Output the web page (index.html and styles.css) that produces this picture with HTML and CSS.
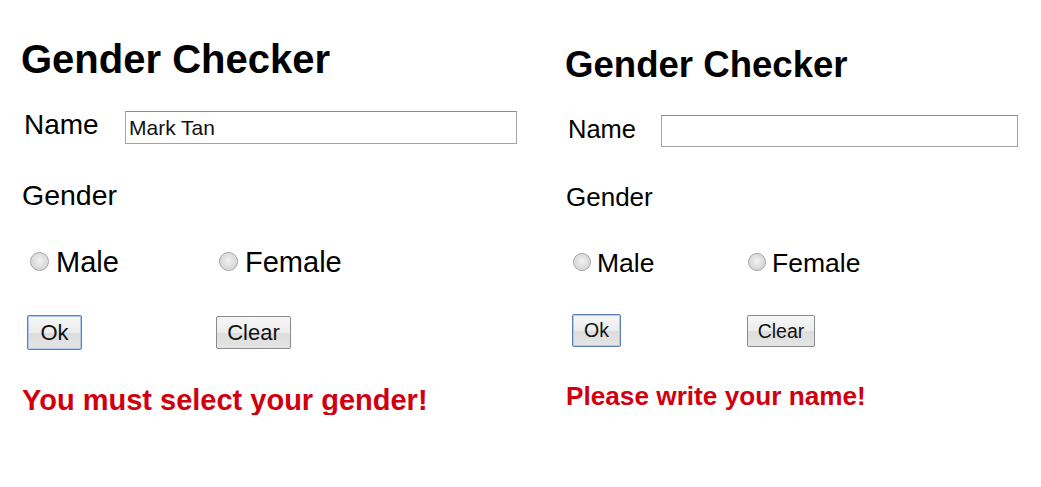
FILE: index.html
```html
<!DOCTYPE html>
<html>
<head>
<meta charset="utf-8">
<title>Gender Checker</title>
<link rel="stylesheet" href="styles.css">
</head>
<body>
<div class="page">
  <section class="panel panel-a">
    <h1 class="title">Gender Checker</h1>
    <div class="name-row">
      <label class="name-label">Name</label>
      <input class="name-input" type="text" value="Mark Tan">
    </div>
    <div class="gender-label">Gender</div>
    <div class="choice-row">
      <label class="choice"><input type="radio" name="ga" class="radio"><span>Male</span></label>
      <label class="choice"><input type="radio" name="ga" class="radio"><span>Female</span></label>
    </div>
    <div class="button-row">
      <button class="btn btn-ok">Ok</button>
      <button class="btn btn-clear">Clear</button>
    </div>
    <p class="error">You must select your gender!</p>
  </section>
  <section class="panel panel-b">
    <h1 class="title">Gender Checker</h1>
    <div class="name-row">
      <label class="name-label">Name</label>
      <input class="name-input" type="text" value="">
    </div>
    <div class="gender-label">Gender</div>
    <div class="choice-row">
      <label class="choice"><input type="radio" name="gb" class="radio"><span>Male</span></label>
      <label class="choice"><input type="radio" name="gb" class="radio"><span>Female</span></label>
    </div>
    <div class="button-row">
      <button class="btn btn-ok">Ok</button>
      <button class="btn btn-clear">Clear</button>
    </div>
    <p class="error">Please write your name!</p>
  </section>
</div>
</body>
</html>
```
FILE: styles.css
```css
html, body {
  margin: 0;
  padding: 0;
  background: #ffffff;
}
body {
  font-family: "Liberation Sans", Arial, sans-serif;
  color: #000;
}
.page {
  display: flex;
  padding-left: 20px;
}
.panel {
  display: flex;
  flex-direction: column;
  align-items: flex-start;
}
.panel-a { width: 544px; }
.panel-b { flex: 1; }

.title {
  margin: 0;
  margin-left: 1px;
  font-weight: bold;
}
.name-row {
  display: flex;
  align-items: flex-start;
}
.name-label {
  display: block;
  margin-left: 4px;
}
.name-input {
  box-sizing: border-box;
  margin: 0;
  border: 1px solid #a3a3a3;
  border-top-color: #8c8c8c;
  background: #fff;
  font-family: "Liberation Sans", Arial, sans-serif;
  color: #111;
  padding: 0 0 0 3px;
  outline: none;
}
.gender-label {
  margin-left: 2px;
}
.choice-row, .button-row {
  display: grid;
  align-items: flex-start;
}
.choice {
  display: flex;
  align-items: flex-start;
}
.radio {
  appearance: none;
  -webkit-appearance: none;
  margin: 0;
  box-sizing: border-box;
  border-radius: 50%;
  border: 1px solid #a2a2a2;
  background: radial-gradient(circle at 50% 45%, #f2f2f2 0%, #dcdcdc 55%, #c4c4c4 100%);
  box-shadow: inset 0 0 1px #fff;
}
.btn {
  box-sizing: border-box;
  margin: 0;
  padding: 0;
  font-family: "Liberation Sans", Arial, sans-serif;
  color: #111;
  background: linear-gradient(#f7f7f7, #ececec 50%, #dddddd 51%, #e4e4e4);
  border: 1px solid #8a8a8a;
  border-radius: 2px;
}
.btn-ok {
  border-color: #5a7fb6;
  box-shadow: inset 0 0 0 1px #aecbef;
}
.error {
  margin: 0;
  margin-left: 2px;
  font-weight: bold;
  color: #d0000f;
}

/* left panel metrics */
.panel-a .title { margin-top: 39px; font-size: 40px; line-height: 40px; }
.panel-a .name-row { margin-top: 32px; }
.panel-a .name-label { width: 101px; font-size: 28px; line-height: 28px; }
.panel-a .name-input { width: 392px; height: 33px; font-size: 21px; }
.panel-a .gender-label { margin-top: 37px; font-size: 28.5px; line-height: 28px; }
.panel-a .choice-row { margin-top: 39px; margin-left: 10px; grid-template-columns: 189px auto; font-size: 29px; line-height: 28px; }
.panel-a .radio { width: 19px; height: 19px; margin-top: 4px; margin-right: 7px; }
.panel-a .button-row { margin-top: 39px; margin-left: 7px; grid-template-columns: 189px auto; }
.panel-a .btn { font-size: 22px; }
.panel-a .btn-ok { width: 55px; height: 35px; }
.panel-a .btn-clear { width: 75px; height: 33px; margin-top: 1px; }
.panel-a .error { margin-top: 36px; font-size: 29px; line-height: 29px; }

/* right panel metrics */
.panel-b .title { margin-top: 46px; font-size: 36.6px; line-height: 37px; }
.panel-b .name-row { margin-top: 32px; }
.panel-b .name-label { width: 93px; margin-top: 1px; font-size: 25.5px; line-height: 26px; }
.panel-b .name-input { width: 357px; height: 32px; font-size: 19px; }
.panel-b .gender-label { margin-top: 37px; font-size: 26px; line-height: 26px; }
.panel-b .choice-row { margin-top: 40px; margin-left: 9px; grid-template-columns: 175px auto; font-size: 26.5px; line-height: 26px; }
.panel-b .radio { width: 18px; height: 18px; margin-top: 3px; margin-right: 6px; }
.panel-b .button-row { margin-top: 38px; margin-left: 8px; grid-template-columns: 175px auto; }
.panel-b .btn { font-size: 19.5px; }
.panel-b .btn-ok { width: 49px; height: 33px; }
.panel-b .btn-clear { width: 68px; height: 32px; margin-top: 1px; }
.panel-b .error { margin-top: 36px; font-size: 26.2px; line-height: 26px; }
```
